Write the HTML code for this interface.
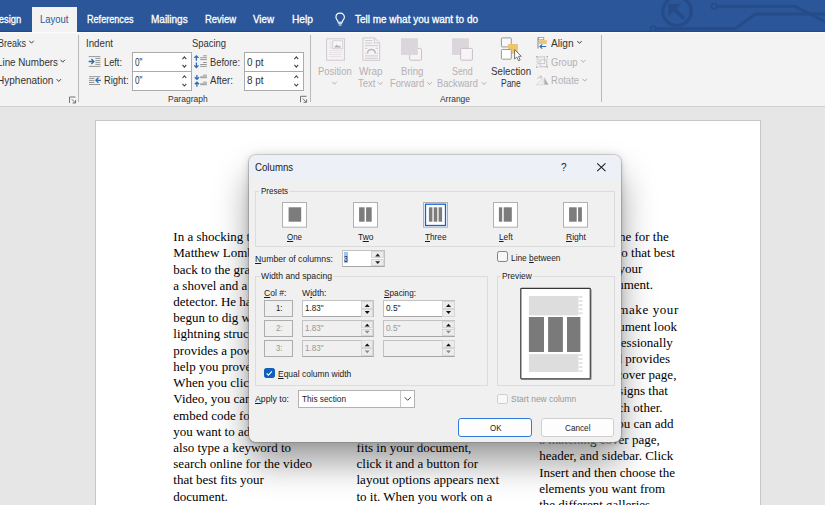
<!DOCTYPE html>
<html lang="en">
<head>
<meta charset="utf-8">
<title>Columns</title>
<style>
html,body{margin:0;padding:0;}
body{width:825px;height:505px;overflow:hidden;background:#e6e6e6;font-family:"Liberation Sans",sans-serif;}
#app{position:relative;width:825px;height:505px;overflow:hidden;background:#e6e6e6;}
.abs{position:absolute;}
.t{position:absolute;white-space:nowrap;line-height:1;transform-origin:0 0;display:block;}
.t.w{-webkit-text-stroke:0.3px #fff;}
.t u{text-decoration:underline;text-decoration-thickness:1px;text-underline-offset:1px;}
#titlebar{left:0;top:0;width:825px;height:31.5px;background:#2b579a;box-shadow:inset 0 -1.2px 0 #23488a;}
#tab{left:32px;top:7px;width:44.6px;height:25px;background:#f3f3f3;}
#ribbon{left:0;top:31.5px;width:825px;height:74px;background:#f3f3f3;border-bottom:1px solid #d2d2d2;box-shadow:inset 0 1.3px 0 #fbfbfb;}
.vsep{position:absolute;top:35px;height:67px;width:1px;background:#b9b9b9;}
.inp{position:absolute;background:#fff;border:1px solid #ababab;box-sizing:border-box;}
#page{left:95px;top:120px;width:666px;height:400px;background:#fff;border:1px solid #c6c6c6;box-sizing:border-box;}
.col{position:absolute;font:13px/16.22px "Liberation Serif",serif;color:#000;white-space:nowrap;}
.rl{position:absolute;font:13px/16.22px "Liberation Serif",serif;color:#000;white-space:nowrap;text-align:right;}
#dlg{left:248.7px;top:154.7px;width:372.8px;height:287.6px;background:#f0f0f0;border-radius:7px;box-shadow:0 0 0 1px rgba(0,0,0,0.13),0 2px 3px rgba(165,165,165,0.8),0 0 9px rgba(0,0,0,0.15),0 21px 34px rgba(0,0,0,0.38);overflow:hidden;}
#dlgtitle{left:0;top:0;width:100%;height:24.3px;background:#eef0f8;}
#dlglayer{left:0;top:0;width:825px;height:505px;}
.grp{position:absolute;border:1px solid #dcdcdc;box-sizing:border-box;}
.grplbl{position:absolute;background:#f0f0f0;height:10px;}
.btn{position:absolute;box-sizing:border-box;border:1px solid #adadad;background:#f0f0f0;}
.edit{position:absolute;box-sizing:border-box;border:1px solid #c2c2c2;border-bottom-color:#a6a6a6;background:#fff;}
.edit.dis{border-color:#c4c4c4;background:#f0f0f0;}
.spin{position:absolute;box-sizing:border-box;border:1px solid #d6d6d6;background:#ececec;}
.cb{position:absolute;box-sizing:border-box;width:10.6px;height:10.6px;border:1px solid #858585;border-radius:2.2px;background:#f7f7f7;}
.cb.dis{border-color:#cfcfcf;background:#f8f8f8;}
.cb.on{border-color:#0f5fbe;background:#0f5fbe;}
.pb{position:absolute;box-sizing:border-box;border:1px solid #cfcfcf;border-radius:3px;background:#fdfdfd;}
</style>
</head>
<body>
<div id="app">

<!-- ===== title bar ===== -->
<div id="titlebar" class="abs"></div>
<svg class="abs" style="left:600px;top:0" width="225" height="32" viewBox="600 0 225 32">
  <g fill="none" stroke="#254c88" stroke-width="3">
    <circle cx="677" cy="11.3" r="14.2" stroke-width="3.3"/>
    <path d="M684.2 18.6 L673 8" stroke-width="4"/>
    <path d="M668.2 3.7 H681 L677 8 L672.5 12.5 L668.2 16 Z" fill="#254c88" stroke="none"/>
    <circle cx="714" cy="6.2" r="2.7" stroke-width="1.9"/>
    <path d="M717.3 6.3 H795 L827 22.6"/>
    <circle cx="653" cy="28.8" r="2.7" stroke-width="1.9"/>
    <path d="M656.3 28.8 H735 L755.5 14.1 H826"/>
  </g>
</svg>
<div id="tab" class="abs"></div>
<!-- lightbulb -->
<svg class="abs" style="left:333.6px;top:11.8px" width="12.9" height="14.7" viewBox="0 0 14 16">
  <path d="M6.7 1.2 C3.9 1.2 2.1 3.2 2.1 5.6 C2.1 7.4 3.2 8.4 3.9 9.4 C4.3 10 4.4 10.6 4.4 11.2 H9 C9 10.6 9.1 10 9.5 9.4 C10.2 8.4 11.3 7.4 11.3 5.6 C11.3 3.2 9.5 1.2 6.7 1.2 Z" fill="none" stroke="#fff" stroke-width="1.25"/>
  <path d="M4.6 12.7 H8.8 M5.2 14.2 H8.2" stroke="#fff" stroke-width="1"/>
</svg>

<!-- ===== ribbon ===== -->
<div id="ribbon" class="abs"></div>
<div class="vsep" style="left:78px"></div>
<div class="vsep" style="left:309.6px"></div>
<div class="vsep" style="left:600.6px"></div>
<div class="inp" style="left:131.9px;top:52.4px;width:60.2px;height:19.6px"></div>
<div class="inp" style="left:131.9px;top:71px;width:60.2px;height:19.6px"></div>
<div class="inp" style="left:243.9px;top:52.4px;width:60.2px;height:19.6px"></div>
<div class="inp" style="left:243.9px;top:71px;width:60.2px;height:19.6px"></div>
<svg class="abs" style="left:0;top:0" width="825" height="110" viewBox="0 0 825 110">
<!-- dialog launchers -->
<g stroke="#666" stroke-width="0.9" fill="none">
  <path d="M75.5 97 H69.5 V103"/><path d="M71.8 99.3 L75.3 102.8 M75.6 100 V103 H72.6"/>
  <path d="M306.5 96.3 H300.5 V102.3"/><path d="M302.8 98.6 L306.3 102.1 M306.6 99.3 V102.3 H303.6"/>
</g>
<!-- indent left -->
<g stroke="#8c8c8c" stroke-width="0.9" fill="none">
  <path d="M88.7 56.6 H100.4 M95.4 58.5 H100.4 M95.4 60.5 H100.4 M95.4 62.4 H100.4 M95.4 64.4 H100.4 M88.7 66.4 H100.4"/>
  <path d="M89 76.7 H100.4 M89 78.6 H94.3 M89 80.6 H94.3 M89 82.5 H94.3 M89 84.5 H100"/>
</g>
<g stroke="#2e6db5" stroke-width="1.3" fill="none">
  <path d="M88.7 61.5 H93.6 M91.4 59 L93.9 61.5 L91.4 64"/>
  <path d="M101 80.3 H96.2 M98.4 77.8 L95.9 80.3 L98.4 82.8"/>
</g>
<!-- spacing before / after -->
<g stroke="#2e6db5" stroke-width="1.3" fill="none">
  <path d="M196.4 56 V60.8 M194.3 57.9 L196.4 55.8 L198.5 57.9"/>
  <path d="M196.4 62.5 V67.4 M194.3 65.4 L196.4 67.5 L198.5 65.4"/>
  <path d="M196.9 75 V79.2 M194.8 77.3 L196.9 79.4 L199 77.3"/>
  <path d="M196.9 82.4 V86.7 M194.8 84.3 L196.9 82.2 L199 84.3"/>
</g>
<g stroke="#8c8c8c" stroke-width="0.9" fill="none">
  <path d="M203 55.8 H206.9 M200.2 57.7 H206.9 M200.2 59.6 H206.9 M203 62.5 H206.9 M200.2 64.5 H206.9 M200.2 66.4 H206.9"/>
  <path d="M203 75.2 H206.9 M203 82.2 H206.9"/>
  <path d="M200.2 77.2 H206.9 M200.2 84.2 H206.9" stroke-width="1.9" stroke="#a6a6a6"/>
</g>
<!-- position (disabled) -->
<rect x="326.6" y="38.8" width="17.8" height="21.4" fill="#f6f3f6" stroke="#cfc9cf" stroke-width="1"/>
<path d="M329 42 H332 M329 44 H332 M329 46 H332 M329 48 H332 M329 50.5 H342 M329 52.5 H342 M329 54.5 H342 M329 56.5 H342" stroke="#e2dde2" stroke-width="0.8"/>
<rect x="332.7" y="40.8" width="10" height="7.9" fill="#f8f6f8" stroke="#d0cad0" stroke-width="0.8"/>
<path d="M334 47.6 L336.6 44.6 L338.2 46.3 L339.3 45.2 L341.3 47.6 Z" fill="#b4b0b4"/>
<!-- wrap text (disabled) -->
<path d="M362.9 37.9 H374.5 L379.7 43.1 V60.3 H362.9 Z" fill="#f6f3f6" stroke="#cfc9cf" stroke-width="1"/>
<path d="M374.5 37.9 V43.1 H379.7" fill="none" stroke="#cfc9cf" stroke-width="0.9"/>
<path d="M365 40.5 H372.5 M365 43 H372.5 M365 45.6 H378 M365 48.3 H367.5 M375.5 48.3 H378 M365 53.3 H366.3 M376.8 53.3 H378 M365 55.9 H378 M365 58.3 H378" stroke="#cbc6cb" stroke-width="0.9"/>
<path d="M367.5 53.4 A3.9 3.9 0 0 1 375.3 53.4" fill="none" stroke="#b9b5b9" stroke-width="1.5"/>
<!-- bring forward (disabled) -->
<rect x="409.7" y="48.4" width="11.8" height="11.8" rx="1" fill="#f7f3f7" stroke="#c6c1c6" stroke-width="1"/>
<rect x="401" y="38.2" width="16.9" height="16.7" fill="#dbd6db"/>
<!-- send backward (disabled) -->
<rect x="452" y="38.2" width="16.9" height="16.7" fill="#dbd6db"/>
<rect x="460.6" y="48.4" width="11.8" height="11.8" rx="1" fill="#f7f3f7" stroke="#c6c1c6" stroke-width="1"/>
<!-- selection pane -->
<rect x="501.4" y="37.9" width="9.9" height="9" rx="0.8" fill="#f8f8f8" stroke="#8f8f8f" stroke-width="0.9"/>
<rect x="508.1" y="44" width="9.8" height="9.7" fill="#f0c36d"/>
<rect x="501.4" y="49.5" width="9.9" height="9.7" rx="0.8" fill="#fff" stroke="#8f8f8f" stroke-width="0.9"/>
<path d="M514.6 49.6 V59 L516.8 57 L518.6 60.8 L520.2 60 L518.5 56.3 H521.3 Z" fill="#fff" stroke="#555" stroke-width="0.8" stroke-linejoin="round"/>
<!-- align -->
<path d="M538 37.2 V48.6" stroke="#777" stroke-width="0.9"/>
<rect x="538.4" y="37.6" width="5.4" height="2.2" fill="#fff" stroke="#8f8f8f" stroke-width="0.7"/>
<rect x="539" y="40.2" width="7.8" height="3.7" fill="#f0c36d"/>
<path d="M546.2 46.5 H540 M542.2 44.4 L540 46.5 L542.2 48.6" stroke="#2e6db5" stroke-width="1.2" fill="none"/>
<!-- group (disabled) -->
<g fill="none" stroke="#cbc5cb" stroke-width="0.9">
  <rect x="538" y="57" width="6.6" height="6.6"/><rect x="540" y="59.8" width="6.6" height="6.6"/>
  <path d="M536.8 58.5 V65.5 M547.4 58.5 V65.5 M538.5 56.6 H545.5 M538.5 67.3 H545.5" stroke-dasharray="1.6 1.2" stroke="#d8d3d8"/>
</g>
<g fill="#a9a6a9"><rect x="536.1" y="56" width="1.4" height="1.4"/><rect x="546.6" y="56" width="1.4" height="1.4"/><rect x="536.1" y="66.4" width="1.4" height="1.4"/><rect x="546.6" y="66.4" width="1.4" height="1.4"/></g>
<!-- rotate (disabled) -->
<path d="M543 84.8 H536.2 L543 78.5 Z" fill="#f3eff3" stroke="#d8d3d8" stroke-width="0.8"/>
<path d="M544.3 77.2 L548.5 84.8 H544.3 Z" fill="#b2aeb2"/>
<path d="M537.6 79 C538 77.2 539.6 76.6 541.3 77" fill="none" stroke="#c0bcc0" stroke-width="0.9"/>
<path d="M540.4 75.6 L541.8 77.1 L540.2 78.5" fill="none" stroke="#b2aeb2" stroke-width="0.9"/>
</svg>

<svg class="abs" style="left:0;top:0" width="825" height="110" viewBox="0 0 825 110"><path d="M29.30 40.80 L31.50 43.20 L33.70 40.80" stroke="#444" stroke-width="1.0" fill="none"/><path d="M60.50 59.80 L62.70 62.20 L64.90 59.80" stroke="#444" stroke-width="1.0" fill="none"/><path d="M56.60 79.10 L58.80 81.50 L61.00 79.10" stroke="#444" stroke-width="1.0" fill="none"/><path d="M332.30 81.80 L334.50 84.20 L336.70 81.80" stroke="#b3b0b3" stroke-width="1.0" fill="none"/><path d="M378.10 82.20 L380.30 84.60 L382.50 82.20" stroke="#b3b0b3" stroke-width="1.0" fill="none"/><path d="M427.40 82.20 L429.60 84.60 L431.80 82.20" stroke="#b3b0b3" stroke-width="1.0" fill="none"/><path d="M481.80 82.20 L484.00 84.60 L486.20 82.20" stroke="#b3b0b3" stroke-width="1.0" fill="none"/><path d="M577.30 41.00 L579.50 43.40 L581.70 41.00" stroke="#444" stroke-width="1.0" fill="none"/><path d="M581.00 59.90 L583.20 62.30 L585.40 59.90" stroke="#b3b0b3" stroke-width="1.0" fill="none"/><path d="M582.60 78.80 L584.80 81.20 L587.00 78.80" stroke="#b3b0b3" stroke-width="1.0" fill="none"/><path d="M182.50 59.10 L184.40 56.90 L186.30 59.10" stroke="#444" stroke-width="1.1" fill="none"/><path d="M182.50 64.90 L184.40 67.10 L186.30 64.90" stroke="#444" stroke-width="1.1" fill="none"/><path d="M182.50 78.00 L184.40 75.80 L186.30 78.00" stroke="#444" stroke-width="1.1" fill="none"/><path d="M182.50 83.80 L184.40 86.00 L186.30 83.80" stroke="#444" stroke-width="1.1" fill="none"/><path d="M294.40 59.10 L296.30 56.90 L298.20 59.10" stroke="#444" stroke-width="1.1" fill="none"/><path d="M294.40 64.90 L296.30 67.10 L298.20 64.90" stroke="#444" stroke-width="1.1" fill="none"/><path d="M294.40 78.00 L296.30 75.80 L298.20 78.00" stroke="#444" stroke-width="1.1" fill="none"/><path d="M294.40 83.80 L296.30 86.00 L298.20 83.80" stroke="#444" stroke-width="1.1" fill="none"/></svg>
<span class="t w" style="left:-7.80px;top:15.00px;font-size:10.3px;color:#fff;transform:scaleX(0.9137)">Design</span>
<span class="t" style="left:40.00px;top:15.00px;font-size:10.3px;color:#2b579a;transform:scaleX(0.9217)">Layout</span>
<span class="t w" style="left:86.50px;top:15.00px;font-size:10.3px;color:#fff;transform:scaleX(0.8831)">References</span>
<span class="t w" style="left:150.60px;top:15.00px;font-size:10.3px;color:#fff;transform:scaleX(0.9714)">Mailings</span>
<span class="t w" style="left:204.50px;top:15.00px;font-size:10.3px;color:#fff;transform:scaleX(0.9181)">Review</span>
<span class="t w" style="left:252.90px;top:15.00px;font-size:10.3px;color:#fff;transform:scaleX(0.9485)">View</span>
<span class="t w" style="left:291.60px;top:15.00px;font-size:10.3px;color:#fff;transform:scaleX(0.9912)">Help</span>
<span class="t w" style="left:355.00px;top:15.00px;font-size:10.3px;color:#fff;transform:scaleX(0.9680)">Tell me what you want to do</span>
<span class="t" style="left:-1.70px;top:39.00px;font-size:10.2px;color:#333;transform:scaleX(0.8828)">Breaks</span>
<span class="t" style="left:-3.50px;top:58.00px;font-size:10.2px;color:#333;transform:scaleX(0.9618)">Line Numbers</span>
<span class="t" style="left:-3.00px;top:76.00px;font-size:10.2px;color:#333;transform:scaleX(0.9839)">Hyphenation</span>
<span class="t" style="left:85.50px;top:39.00px;font-size:10.2px;color:#333;transform:scaleX(0.9531)">Indent</span>
<span class="t" style="left:104.00px;top:58.00px;font-size:10.2px;color:#333;transform:scaleX(0.9078)">Left:</span>
<span class="t" style="left:104.00px;top:76.00px;font-size:10.2px;color:#333;transform:scaleX(0.9202)">Right:</span>
<span class="t" style="left:134.50px;top:58.00px;font-size:10.2px;color:#333;transform:scaleX(0.8067)">0"</span>
<span class="t" style="left:134.50px;top:76.00px;font-size:10.2px;color:#333;transform:scaleX(0.8067)">0"</span>
<span class="t" style="left:191.80px;top:39.00px;font-size:10.2px;color:#333;transform:scaleX(0.9259)">Spacing</span>
<span class="t" style="left:210.20px;top:58.00px;font-size:10.2px;color:#333;transform:scaleX(0.9130)">Before:</span>
<span class="t" style="left:210.20px;top:76.00px;font-size:10.2px;color:#333;transform:scaleX(0.9442)">After:</span>
<span class="t" style="left:247.00px;top:58.00px;font-size:10.2px;color:#333;transform:scaleX(0.9706)">0 pt</span>
<span class="t" style="left:247.00px;top:76.00px;font-size:10.2px;color:#333;transform:scaleX(0.9706)">8 pt</span>
<span class="t" style="left:167.60px;top:95.00px;font-size:9px;color:#333;transform:scaleX(0.9422)">Paragraph</span>
<span class="t" style="left:440.40px;top:95.00px;font-size:9px;color:#333;transform:scaleX(0.9366)">Arrange</span>
<span class="t" style="left:318.40px;top:67.00px;font-size:10.2px;color:#b3b0b3;transform:scaleX(0.9324)">Position</span>
<span class="t" style="left:359.00px;top:67.00px;font-size:10.2px;color:#b3b0b3;transform:scaleX(0.9770)">Wrap</span>
<span class="t" style="left:358.30px;top:79.00px;font-size:10.2px;color:#b3b0b3;transform:scaleX(0.9311)">Text</span>
<span class="t" style="left:400.60px;top:67.00px;font-size:10.2px;color:#b3b0b3;transform:scaleX(0.9413)">Bring</span>
<span class="t" style="left:389.50px;top:79.00px;font-size:10.2px;color:#b3b0b3;transform:scaleX(0.9124)">Forward</span>
<span class="t" style="left:452.40px;top:67.00px;font-size:10.2px;color:#b3b0b3;transform:scaleX(0.8657)">Send</span>
<span class="t" style="left:437.40px;top:79.00px;font-size:10.2px;color:#b3b0b3;transform:scaleX(0.9121)">Backward</span>
<span class="t" style="left:491.00px;top:67.00px;font-size:10.2px;color:#333;transform:scaleX(0.9565)">Selection</span>
<span class="t" style="left:501.20px;top:79.00px;font-size:10.2px;color:#333;transform:scaleX(0.8320)">Pane</span>
<span class="t" style="left:551.40px;top:39.00px;font-size:10.2px;color:#333;transform:scaleX(0.9975)">Align</span>
<span class="t" style="left:551.40px;top:58.00px;font-size:10.2px;color:#b3b0b3;transform:scaleX(0.9355)">Group</span>
<span class="t" style="left:551.40px;top:76.00px;font-size:10.2px;color:#b3b0b3;transform:scaleX(0.9362)">Rotate</span>

<!-- ===== document ===== -->
<div id="page" class="abs"></div>
<div class="col" style="left:173.3px;top:229.10px">In a shocking turn of events,<br>Matthew Lombardi came<br>back to the graveyard with<br>a shovel and a metal<br>detector. He had just<br>begun to dig when<br>lightning struck. Video<br>provides a powerful way to<br>help you prove your point.<br>When you click Online<br>Video, you can paste in the<br>embed code for the video<br>you want to add. You can<br>also type a keyword to<br>search online for the video<br>that best fits your<br>document.</div>
<div class="col" style="left:356.5px;top:229.10px">To make your document<br>look professionally<br>produced, Word provides<br>header, footer, cover page,<br>and text box designs that<br>complement each other.<br>Themes and styles also<br>help keep your document<br>coordinated. Save time in<br>Word with new buttons<br>that show up where you<br>need them. To change the<br>way a picture<br>fits in your document,<br>click it and a button for<br>layout options appears next<br>to it. When you work on a</div>
<div class="rl" style="right:156.3px;top:228.80px;">to search online for the</div>
<div class="rl" style="right:150.2px;top:245.02px;">video that best</div>
<div class="rl" style="right:182.7px;top:261.24px;">fits your</div>
<div class="rl" style="right:172.1px;top:277.46px;">document.</div>
<div class="rl" style="right:146.1px;top:302.38px;letter-spacing:0.6px;">To make your</div>
<div class="rl" style="right:148.0px;top:318.60px;">document look</div>
<div class="rl" style="right:152.2px;top:334.82px;">professionally</div>
<div class="rl" style="right:155.0px;top:351.04px;">produced, Word provides</div>
<div class="rl" style="right:148.6px;top:367.26px;">header, footer, cover page,</div>
<div class="rl" style="right:157.2px;top:383.48px;">and text box designs that</div>
<div class="rl" style="right:162.4px;top:399.70px;">complement each other.</div>
<div class="rl" style="right:151.4px;top:415.92px;">For example, you can add</div>
<div class="col" style="left:539.2px;top:432.14px">a matching cover page,<br>header, and sidebar. Click<br>Insert and then choose the<br>elements you want from<br>the different galleries.</div>

<!-- ===== dialog ===== -->
<div id="dlg" class="abs"><div id="dlgtitle" class="abs"></div></div>
<div id="dlglayer" class="abs">
<svg class="abs" style="left:596px;top:161.5px" width="11" height="11" viewBox="0 0 11 11"><path d="M1.2 1.4 L9.5 9.2 M9.5 1.4 L1.2 9.2" stroke="#1b1b1b" stroke-width="1.05" fill="none"/></svg>
<div class="grp" style="left:255.3px;top:190.6px;width:359.4px;height:56.5px"></div>
<div class="grplbl" style="left:259.4px;top:186px;width:29.6px"></div>
<div class="grp" style="left:255.3px;top:275.6px;width:232.4px;height:110px"></div>
<div class="grplbl" style="left:259.6px;top:270.5px;width:73.4px"></div>
<div class="grp" style="left:497.4px;top:275.6px;width:117.3px;height:110px"></div>
<div class="grplbl" style="left:501.2px;top:270.5px;width:31.8px"></div>
<svg class="abs" style="left:282.0px;top:202px" width="25" height="26" viewBox="0 0 25 26"><rect x="0.5" y="0.5" width="24" height="24.7" fill="#fff" stroke="#b0b0b0" stroke-width="1"/><rect x="6.6" y="5.3" width="12.6" height="14.4" fill="#7c7c7c"/></svg>
<svg class="abs" style="left:353.0px;top:202px" width="25" height="26" viewBox="0 0 25 26"><rect x="0.5" y="0.5" width="24" height="24.7" fill="#fff" stroke="#b0b0b0" stroke-width="1"/><rect x="6.1" y="5.3" width="5.5" height="14.4" fill="#7c7c7c"/><rect x="13.1" y="5.3" width="5.6" height="14.4" fill="#7c7c7c"/></svg>
<svg class="abs" style="left:423.3px;top:202px" width="25" height="26" viewBox="0 0 25 26"><rect x="0.5" y="0.5" width="24" height="24.7" fill="#fff" stroke="#b0b0b0" stroke-width="1"/><rect x="2.5" y="2.2" width="20" height="21.3" fill="none" stroke="#0a64d8" stroke-width="1.3"/><rect x="5.9" y="5.3" width="3.5" height="14.4" fill="#7c7c7c"/><rect x="10.7" y="5.3" width="3.6" height="14.4" fill="#7c7c7c"/><rect x="15.6" y="5.3" width="3.5" height="14.4" fill="#7c7c7c"/></svg>
<svg class="abs" style="left:493.1px;top:202px" width="25" height="26" viewBox="0 0 25 26"><rect x="0.5" y="0.5" width="24" height="24.7" fill="#fff" stroke="#b0b0b0" stroke-width="1"/><rect x="5.9" y="5.3" width="3.3" height="14.4" fill="#7c7c7c"/><rect x="10.7" y="5.3" width="8.1" height="14.4" fill="#7c7c7c"/></svg>
<svg class="abs" style="left:562.9px;top:202px" width="25" height="26" viewBox="0 0 25 26"><rect x="0.5" y="0.5" width="24" height="24.7" fill="#fff" stroke="#b0b0b0" stroke-width="1"/><rect x="6.1" y="5.3" width="7.6" height="14.4" fill="#7c7c7c"/><rect x="15.1" y="5.3" width="3.8" height="14.4" fill="#7c7c7c"/></svg>
<div class="edit" style="left:341.8px;top:250.3px;width:42.9px;height:16.4px;background:#fff"></div>
<div class="spin" style="left:371.4px;top:250.9px;width:12.6px;height:7.6px"></div>
<div class="spin" style="left:371.4px;top:258.7px;width:12.6px;height:7.4px"></div>
<div class="abs" style="left:344.1px;top:252.1px;width:4.1px;height:10.7px;background:#9cc6f3"></div>
<div class="btn" style="left:264.1px;top:300.4px;width:28.6px;height:16.8px"></div>
<div class="edit" style="left:301.9px;top:300.4px;width:72.3px;height:16.8px;background:#fff"></div>
<div class="spin" style="left:360.9px;top:301.0px;width:12.6px;height:7.8px"></div>
<div class="spin" style="left:360.9px;top:309.0px;width:12.6px;height:7.6px"></div>
<div class="edit" style="left:383.2px;top:300.4px;width:72.3px;height:16.8px;background:#fff"></div>
<div class="spin" style="left:442.2px;top:301.0px;width:12.6px;height:7.8px"></div>
<div class="spin" style="left:442.2px;top:309.0px;width:12.6px;height:7.6px"></div>
<div class="btn" style="left:264.1px;top:320.0px;width:28.6px;height:16.8px"></div>
<div class="edit" style="left:301.9px;top:320.0px;width:72.3px;height:16.8px;background:#f0f0f0"></div>
<div class="spin" style="left:360.9px;top:320.6px;width:12.6px;height:7.8px"></div>
<div class="spin" style="left:360.9px;top:328.6px;width:12.6px;height:7.6px"></div>
<div class="edit" style="left:383.2px;top:320.0px;width:72.3px;height:16.8px;background:#f0f0f0"></div>
<div class="spin" style="left:442.2px;top:320.6px;width:12.6px;height:7.8px"></div>
<div class="spin" style="left:442.2px;top:328.6px;width:12.6px;height:7.6px"></div>
<div class="btn" style="left:264.1px;top:339.5px;width:28.6px;height:17.2px"></div>
<div class="edit" style="left:301.9px;top:339.5px;width:72.3px;height:17.2px;background:#f0f0f0"></div>
<div class="spin" style="left:360.9px;top:340.1px;width:12.6px;height:8.0px"></div>
<div class="spin" style="left:360.9px;top:348.3px;width:12.6px;height:7.8px"></div>
<div class="edit" style="left:383.2px;top:339.5px;width:72.3px;height:17.2px;background:#f0f0f0"></div>
<div class="spin" style="left:442.2px;top:340.1px;width:12.6px;height:8.0px"></div>
<div class="spin" style="left:442.2px;top:348.3px;width:12.6px;height:7.8px"></div>
<svg class="abs" style="left:0;top:0" width="825" height="505" viewBox="0 0 825 505"><polygon points="375.20,256.40 377.70,253.60 380.20,256.40" fill="#222"/><polygon points="375.20,261.20 377.70,264.00 380.20,261.20" fill="#222"/><polygon points="364.70,306.90 367.20,304.10 369.70,306.90" fill="#111"/><polygon points="364.70,311.10 367.20,313.90 369.70,311.10" fill="#111"/><polygon points="446.00,306.90 448.50,304.10 451.00,306.90" fill="#111"/><polygon points="446.00,311.10 448.50,313.90 451.00,311.10" fill="#111"/><polygon points="364.70,326.50 367.20,323.70 369.70,326.50" fill="#111"/><polygon points="364.70,330.70 367.20,333.50 369.70,330.70" fill="#8a8a8a"/><polygon points="446.00,326.50 448.50,323.70 451.00,326.50" fill="#111"/><polygon points="446.00,330.70 448.50,333.50 451.00,330.70" fill="#8a8a8a"/><polygon points="364.70,346.20 367.20,343.40 369.70,346.20" fill="#111"/><polygon points="364.70,350.40 367.20,353.20 369.70,350.40" fill="#8a8a8a"/><polygon points="446.00,346.20 448.50,343.40 451.00,346.20" fill="#111"/><polygon points="446.00,350.40 448.50,353.20 451.00,350.40" fill="#8a8a8a"/></svg>
<div class="cb" style="left:497.1px;top:251.4px"></div>
<div class="cb on" style="left:264.2px;top:367.8px"></div>
<svg class="abs" style="left:264.2px;top:367.8px" width="10.4" height="10.4" viewBox="0 0 10.4 10.4"><path d="M2.6 5.3 L4.4 7.1 L7.9 3.4" stroke="#fff" stroke-width="1.1" fill="none"/></svg>
<div class="cb dis" style="left:497.2px;top:393.7px"></div>
<div class="edit" style="left:298.2px;top:390px;width:116.4px;height:17.5px;border-color:#b2b2b2"></div>
<div class="abs" style="left:400.4px;top:391px;width:1px;height:15.5px;background:#c8c8c8"></div>
<svg class="abs" style="left:402px;top:394px" width="12" height="10" viewBox="0 0 12 10"><path d="M2.6 3.2 L5.7 6.3 L8.8 3.2" stroke="#444" stroke-width="1" fill="none"/></svg>
<svg class="abs" style="left:0;top:0" width="825" height="505" viewBox="0 0 825 505"><rect x="520.8" y="288.3" width="69.5" height="90.5" rx="0.8" fill="#fff" stroke="#363636" stroke-width="1.2"/><path d="M591.1 289.4 V379.4 H521.6" stroke="#777" stroke-width="0.8" fill="none"/><rect x="528.9" y="296" width="49.5" height="19.4" fill="#dddddd"/><rect x="528.9" y="354.1" width="49.5" height="17.9" fill="#dddddd"/><rect x="578.4" y="296.00" width="4.1" height="2" fill="#e3e3e3"/><rect x="578.4" y="354.10" width="4.1" height="1.9" fill="#e3e3e3"/><rect x="578.4" y="300.05" width="4.1" height="2" fill="#e3e3e3"/><rect x="578.4" y="358.10" width="4.1" height="1.9" fill="#e3e3e3"/><rect x="578.4" y="304.10" width="4.1" height="2" fill="#e3e3e3"/><rect x="578.4" y="362.10" width="4.1" height="1.9" fill="#e3e3e3"/><rect x="578.4" y="308.15" width="4.1" height="2" fill="#e3e3e3"/><rect x="578.4" y="366.10" width="4.1" height="1.9" fill="#e3e3e3"/><rect x="578.4" y="312.20" width="4.1" height="2" fill="#e3e3e3"/><rect x="578.4" y="370.10" width="4.1" height="1.9" fill="#e3e3e3"/><rect x="528.9" y="317" width="15.1" height="35" fill="#7a7a7a"/><rect x="548.1" y="317" width="14.8" height="35" fill="#7a7a7a"/><rect x="567" y="317" width="13.4" height="35" fill="#7a7a7a"/></svg>
<div class="pb" style="left:458.4px;top:418px;width:73.3px;height:18.6px;border:1.4px solid #2f7be0"></div>
<div class="pb" style="left:541.3px;top:418px;width:73px;height:18.6px"></div>
<span class="t" style="left:255.30px;top:163.00px;font-size:10.3px;color:#1b1b1b;transform:scaleX(0.9399)">Columns</span>
<span class="t" style="left:561.20px;top:162.00px;font-size:11px;color:#1b1b1b;transform:scaleX(0.9143)">?</span>
<span class="t" style="left:260.90px;top:187.00px;font-size:8.8px;color:#1b1b1b;transform:scaleX(0.9085)">Presets</span>
<span class="t" style="left:287.00px;top:233.00px;font-size:8.8px;color:#1b1b1b;transform:scaleX(0.9014)"><u>O</u>ne</span>
<span class="t" style="left:357.50px;top:233.00px;font-size:8.8px;color:#1b1b1b;transform:scaleX(0.9594)">T<u>w</u>o</span>
<span class="t" style="left:424.50px;top:233.00px;font-size:8.8px;color:#1b1b1b;transform:scaleX(0.9354)"><u>T</u>hree</span>
<span class="t" style="left:498.70px;top:233.00px;font-size:8.8px;color:#1b1b1b;transform:scaleX(0.9396)"><u>L</u>eft</span>
<span class="t" style="left:565.50px;top:233.00px;font-size:8.8px;color:#1b1b1b;transform:scaleX(0.9734)"><u>R</u>ight</span>
<span class="t" style="left:255.00px;top:255.00px;font-size:8.8px;color:#1b1b1b;transform:scaleX(0.9907)"><u>N</u>umber of columns:</span>
<span class="t" style="left:510.70px;top:254.00px;font-size:8.8px;color:#1b1b1b;transform:scaleX(0.9454)">Line <u>b</u>etween</span>
<span class="t" style="left:261.00px;top:272.00px;font-size:8.8px;color:#1b1b1b;transform:scaleX(0.9810)">Width and spacing</span>
<span class="t" style="left:501.90px;top:272.00px;font-size:8.8px;color:#1b1b1b;transform:scaleX(0.9490)">Preview</span>
<span class="t" style="left:264.00px;top:289.00px;font-size:8.8px;color:#1b1b1b;transform:scaleX(0.9783)"><u>C</u>ol #:</span>
<span class="t" style="left:302.00px;top:289.00px;font-size:8.8px;color:#1b1b1b;transform:scaleX(0.9812)">W<u>i</u>dth:</span>
<span class="t" style="left:383.50px;top:289.00px;font-size:8.8px;color:#1b1b1b;transform:scaleX(0.9343)"><u>S</u>pacing:</span>
<span class="t" style="left:275.50px;top:304.00px;font-size:8.8px;color:#1b1b1b;transform:scaleX(0.8851)">1:</span>
<span class="t" style="left:275.50px;top:324.00px;font-size:8.8px;color:#989898;transform:scaleX(0.8851)">2:</span>
<span class="t" style="left:275.50px;top:344.00px;font-size:8.8px;color:#989898;transform:scaleX(0.8851)">3:</span>
<span class="t" style="left:304.50px;top:304.00px;font-size:8.8px;color:#1b1b1b;transform:scaleX(0.9136)">1.83"</span>
<span class="t" style="left:304.50px;top:324.00px;font-size:8.8px;color:#989898;transform:scaleX(0.9136)">1.83"</span>
<span class="t" style="left:304.50px;top:344.00px;font-size:8.8px;color:#989898;transform:scaleX(0.9136)">1.83"</span>
<span class="t" style="left:385.50px;top:304.00px;font-size:8.8px;color:#1b1b1b;transform:scaleX(0.9440)">0.5"</span>
<span class="t" style="left:385.50px;top:324.00px;font-size:8.8px;color:#989898;transform:scaleX(0.9440)">0.5"</span>
<span class="t" style="left:278.00px;top:370.00px;font-size:8.8px;color:#1b1b1b;transform:scaleX(0.9607)"><u>E</u>qual column width</span>
<span class="t" style="left:255.00px;top:395.00px;font-size:8.8px;color:#1b1b1b;transform:scaleX(0.9927)"><u>A</u>pply to:</span>
<span class="t" style="left:301.50px;top:395.00px;font-size:8.8px;color:#1b1b1b;transform:scaleX(0.9374)">This section</span>
<span class="t" style="left:510.70px;top:395.00px;font-size:8.8px;color:#989898;transform:scaleX(0.9607)">Start new column</span>
<span class="t" style="left:344.30px;top:255.00px;font-size:8.8px;color:#14244f;transform:scaleX(0.7541)">3</span>
<span class="t" style="left:489.50px;top:424.00px;font-size:8.8px;color:#1b1b1b;transform:scaleX(0.9042)">OK</span>
<span class="t" style="left:565.00px;top:424.00px;font-size:8.8px;color:#1b1b1b;transform:scaleX(0.9310)">Cancel</span>
</div>

</div>
</body>
</html>
